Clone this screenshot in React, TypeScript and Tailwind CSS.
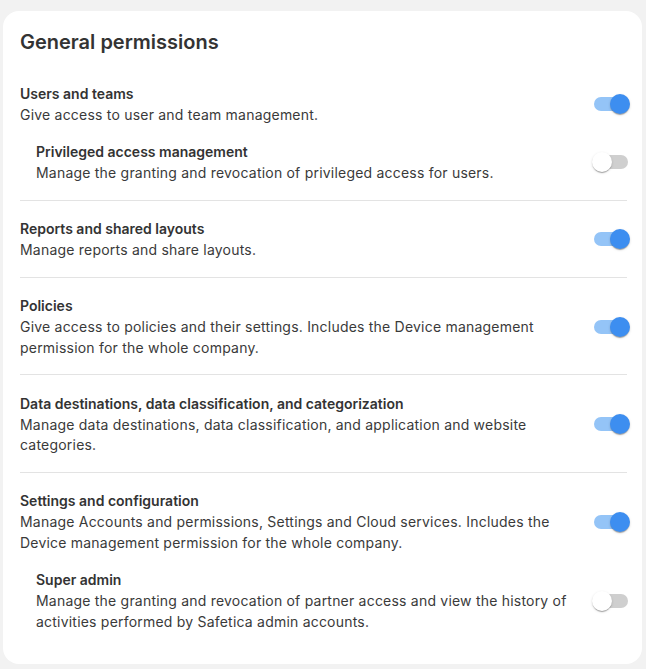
import { useState } from "react"

type Permission = {
  title: string
  description: string
  enabled: boolean
  sub?: Permission
}

const permissions: Permission[] = [
  {
    title: "Users and teams",
    description: "Give access to user and team management.",
    enabled: true,
    sub: {
      title: "Privileged access management",
      description: "Manage the granting and revocation of privileged access for users.",
      enabled: false,
    },
  },
  {
    title: "Reports and shared layouts",
    description: "Manage reports and share layouts.",
    enabled: true,
  },
  {
    title: "Policies",
    description:
      "Give access to policies and their settings. Includes the Device management permission for the whole company.",
    enabled: true,
  },
  {
    title: "Data destinations, data classification, and categorization",
    description: "Manage data destinations, data classification, and application and website categories.",
    enabled: true,
  },
  {
    title: "Settings and configuration",
    description:
      "Manage Accounts and permissions, Settings and Cloud services. Includes the Device management permission for the whole company.",
    enabled: true,
    sub: {
      title: "Super admin",
      description:
        "Manage the granting and revocation of partner access and view the history of activities performed by Safetica admin accounts.",
      enabled: false,
    },
  },
]

function Toggle({ initial }: { initial: boolean }) {
  const [on, setOn] = useState(initial)
  return (
    <button
      type="button"
      onClick={() => setOn(!on)}
      className="relative -mr-[3px] h-5 w-[38px] shrink-0 cursor-pointer"
    >
      <span
        className={`absolute left-[2px] right-[2px] top-[3px] h-[14px] rounded-full ${
          on ? "bg-[#94c4f7]" : "bg-[#cfcfcf]"
        }`}
      />
      <span
        className={`absolute top-0 h-5 w-5 rounded-full shadow-[0_2px_1px_-1px_rgba(0,0,0,0.2),0_1px_1px_0_rgba(0,0,0,0.14),0_1px_3px_0_rgba(0,0,0,0.12)] ${
          on ? "left-[18px] bg-[#3d8ef0]" : "left-0 bg-white"
        }`}
      />
    </button>
  )
}

function Row({ item, indent }: { item: Permission; indent?: boolean }) {
  return (
    <div className={`flex items-center gap-6 ${indent ? "pl-4" : ""}`}>
      <div className="min-w-0 flex-1">
        <div className="text-[14px] font-semibold leading-[22px] text-[#333333]">{item.title}</div>
        <div className="text-[14px] leading-[20.5px] tracking-[0.015em] text-[#3a3a3a]">{item.description}</div>
      </div>
      <Toggle initial={item.enabled} />
    </div>
  )
}

export default function App() {
  return (
    <div className="min-h-[669px] bg-[#f2f2f2] pl-[3px] pt-[11px] font-['Inter',sans-serif]">
      <div className="w-[639px] rounded-2xl bg-white pb-4 pl-[17px] pr-[15px] pt-[17px]">
        <h2 className="mb-[9px] text-[20px] font-semibold leading-[28px] text-[#333333]">General permissions</h2>
        <div className="divide-y divide-[#e3e3e3]">
          {permissions.map((p) => (
            <div key={p.title} className="flex flex-col gap-4 pb-4 pt-[17.5px]">
              <Row item={p} />
              {p.sub && <Row item={p.sub} indent />}
            </div>
          ))}
        </div>
      </div>
    </div>
  )
}
